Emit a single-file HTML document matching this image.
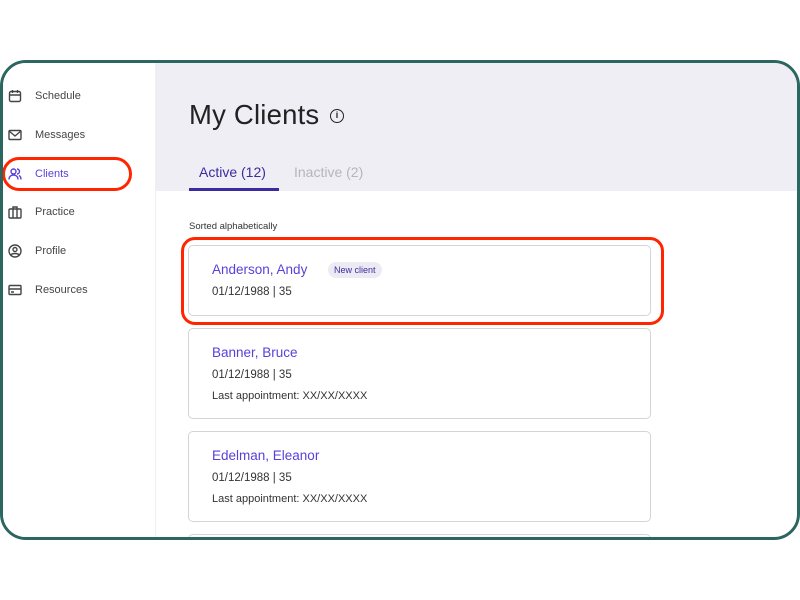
<!DOCTYPE html>
<html><head><meta charset="utf-8"><style>
*{box-sizing:border-box;margin:0;padding:0}
body{width:800px;height:600px;background:#fff;font-family:"Liberation Sans",sans-serif;position:relative;overflow:hidden}
.frame{position:absolute;left:0;top:60px;width:800px;height:480px;border:3.5px solid #2b6660;border-radius:26px;overflow:hidden;background:#fff}
.side{position:absolute;left:0;top:0;width:153px;height:100%;background:#fff;border-right:1px solid #f0f0f3}
.nav{position:absolute;left:5px;font-size:11px;color:#444;display:flex;align-items:center}
.nav svg{width:14px;height:14px;margin-right:13px;fill:none;stroke:#444;stroke-width:1.4}
.head{position:absolute;left:153px;top:0;right:0;height:128px;background:#efeef5}
h1{position:absolute;left:186px;top:36px;font-size:27.5px;font-weight:normal;color:#222;letter-spacing:0.2px}
.info{position:absolute;left:327px;top:46px;width:14px;height:14px;border:1.6px solid #222;border-radius:50%;font-size:9px;text-align:center;line-height:11px;font-weight:bold;color:#222}
.tab{position:absolute;top:101px;font-size:14px}
.ul{position:absolute;left:186px;top:125px;width:90px;height:3px;background:#3a2ca0}
.sorted{position:absolute;left:186px;top:158px;font-size:9.5px;color:#333}
.card{position:absolute;left:185px;width:463px;border:1px solid #d4d4d8;border-radius:5px;background:#fff}
.nm{position:absolute;left:23px;top:16px;font-size:13.5px;color:#5b3fd9}
.l2{position:absolute;left:23px;top:40px;font-size:11.5px;color:#333}
.l3{position:absolute;left:23px;top:61px;font-size:11px;color:#333}
.red{position:absolute;border:3px solid #ff2500;border-radius:14px}
.badge{position:absolute;left:139px;top:16px;background:#ecebf3;color:#3a2ca0;border-radius:9px;font-size:9px;padding:3px 6px}
</style></head><body>
<div class="frame">
<div class="side">
<div class="nav" style="top:26px"><svg viewBox="0 0 14 14"><rect x="1.5" y="2.5" width="11" height="10" rx="1.5"/><path d="M1.5 6h11M4.5 1v3M9.5 1v3"/></svg>Schedule</div>
<div class="nav" style="top:65px"><svg viewBox="0 0 14 14"><rect x="1" y="2.5" width="12" height="9" rx="1"/><path d="M1 3l6 5 6-5"/></svg>Messages</div>
<div class="nav" style="top:104px;color:#5b3fd9"><svg viewBox="0 0 14 14" style="stroke:#5b3fd9"><circle cx="5.5" cy="4.5" r="2.5"/><path d="M1 12.5c0-3 2-4.5 4.5-4.5s4.5 1.5 4.5 4.5M9 2a2.5 2.5 0 010 5M11 8.5c1.5.7 2 2 2 4"/></svg>Clients</div>
<div class="nav" style="top:142px"><svg viewBox="0 0 14 14"><rect x="1" y="4" width="12" height="9" rx="1"/><path d="M5 4V2h4v2M5 4v9M9 4v9"/></svg>Practice</div>
<div class="nav" style="top:181px"><svg viewBox="0 0 14 14"><circle cx="7" cy="7" r="6"/><circle cx="7" cy="5.5" r="2"/><path d="M3 11c1-2 7-2 8 0"/></svg>Profile</div>
<div class="nav" style="top:220px"><svg viewBox="0 0 14 14"><rect x="1" y="2.5" width="12" height="9" rx="1"/><path d="M1 6h12M3 9h3"/></svg>Resources</div>
</div>
<div class="head"></div>
<h1>My Clients</h1><div class="info">i</div>
<div class="tab" style="left:196px;color:#3a2ca0">Active (12)</div>
<div class="tab" style="left:291px;color:#b5b5bb">Inactive (2)</div>
<div class="ul"></div>
<div class="sorted">Sorted alphabetically</div>
<div class="card" style="top:182px;height:71px"><div class="nm">Anderson, Andy</div><div class="badge">New client</div><div class="l2">01/12/1988 | 35</div></div>
<div class="card" style="top:265px;height:91px"><div class="nm">Banner, Bruce</div><div class="l2">01/12/1988 | 35</div><div class="l3">Last appointment: XX/XX/XXXX</div></div>
<div class="card" style="top:368px;height:91px"><div class="nm">Edelman, Eleanor</div><div class="l2">01/12/1988 | 35</div><div class="l3">Last appointment: XX/XX/XXXX</div></div>
<div class="card" style="top:471px;height:40px"></div>
<div class="red" style="left:178px;top:174px;width:483px;height:88px"></div>
<div class="red" style="left:-1px;top:94px;width:130px;height:34px;border-radius:17px"></div>
</div>
</body></html>
